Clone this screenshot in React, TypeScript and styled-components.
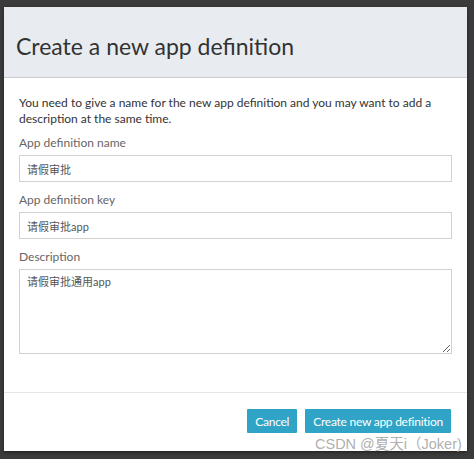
import React from "react";
import styled, { createGlobalStyle } from "styled-components";

const Global = createGlobalStyle`
  html, body { margin: 0; padding: 0; background: #3b3b3b; }
  body { font-family: Lato, "Noto Sans CJK SC", sans-serif; }
  * { box-sizing: border-box; }
`;

const Page = styled.div`
  width: 474px;
  height: 459px;
  padding: 7px 7px 0 4px;
  background: #3b3b3b;
  position: relative;
  overflow: hidden;
`;

const Modal = styled.div`
  width: 463px;
  height: 444px;
  background: #ffffff;
  display: flex;
  flex-direction: column;
  box-shadow: 0 1px 3px rgba(0, 0, 0, 0.5);
`;

const Header = styled.div`
  height: 71px;
  background: #e8ecf1;
  border-bottom: 1px solid #c9cdd2;
  padding: 24px 12px 0 12px;
`;

const Title = styled.h3`
  margin: 0;
  font-family: Lato, sans-serif;
  font-weight: 400;
  font-size: 23px;
  line-height: 30px;
  color: #333333;
`;

const Body = styled.div`
  padding: 17px 15px 38px 15px;
  border-bottom: 1px solid #e5e5e5;
`;

const Intro = styled.p`
  margin: 0 0 7px 0;
  font-size: 12px;
  line-height: 16px;
  color: #333333;
`;

const Field = styled.div<{ $last?: boolean }>`
  display: flex;
  flex-direction: column;
  gap: 4px;
  margin-bottom: ${(p) => (p.$last ? "0" : "9px")};
`;

const Label = styled.label`
  font-size: 12px;
  line-height: 17px;
  color: #666666;
`;

const TextInput = styled.input`
  width: 433px;
  height: 27px;
  border: 1px solid #d2d2d2;
  padding: 0 7px;
  font-family: Lato, "Noto Sans CJK SC", sans-serif;
  font-size: 11px;
  color: #555555;
  background: #fff;
  outline: none;
`;

const TextArea = styled.textarea`
  width: 433px;
  height: 85px;
  border: 1px solid #d2d2d2;
  padding: 5px 7px;
  font-family: Lato, "Noto Sans CJK SC", sans-serif;
  font-size: 11px;
  line-height: 14px;
  color: #555555;
  background: #fff;
  outline: none;
  resize: vertical;
  display: block;
`;

const Footer = styled.div`
  display: flex;
  justify-content: flex-end;
  gap: 8px;
  padding: 16px 16px 0 0;
`;

const Button = styled.button`
  height: 24px;
  border: none;
  background: #2fa4c6;
  color: #ffffff;
  font-family: Lato, sans-serif;
  font-size: 12px;
  letter-spacing: -0.25px;
  padding: 0 8px;
  border-radius: 1px;
  cursor: pointer;
`;

const Watermark = styled.div`
  position: absolute;
  left: 315px;
  top: 436px;
  font-family: "Liberation Sans", "Noto Sans CJK SC", sans-serif;
  font-size: 14.5px;
  line-height: 17px;
  color: rgba(165, 165, 165, 0.9);
  white-space: nowrap;
`;

export default function App() {
  return (
    <Page>
      <Global />
      <Modal>
        <Header>
          <Title>Create a new app definition</Title>
        </Header>
        <Body>
          <Intro>
            You need to give a name for the new app definition and you may want to add a
            description at the same time.
          </Intro>
          <Field>
            <Label>App definition name</Label>
            <TextInput defaultValue="请假审批" />
          </Field>
          <Field>
            <Label>App definition key</Label>
            <TextInput defaultValue="请假审批app" />
          </Field>
          <Field $last>
            <Label>Description</Label>
            <TextArea defaultValue="请假审批通用app" />
          </Field>
        </Body>
        <Footer>
          <Button>Cancel</Button>
          <Button>Create new app definition</Button>
        </Footer>
      </Modal>
      <Watermark>CSDN @夏天i（Joker)</Watermark>
    </Page>
  );
}
